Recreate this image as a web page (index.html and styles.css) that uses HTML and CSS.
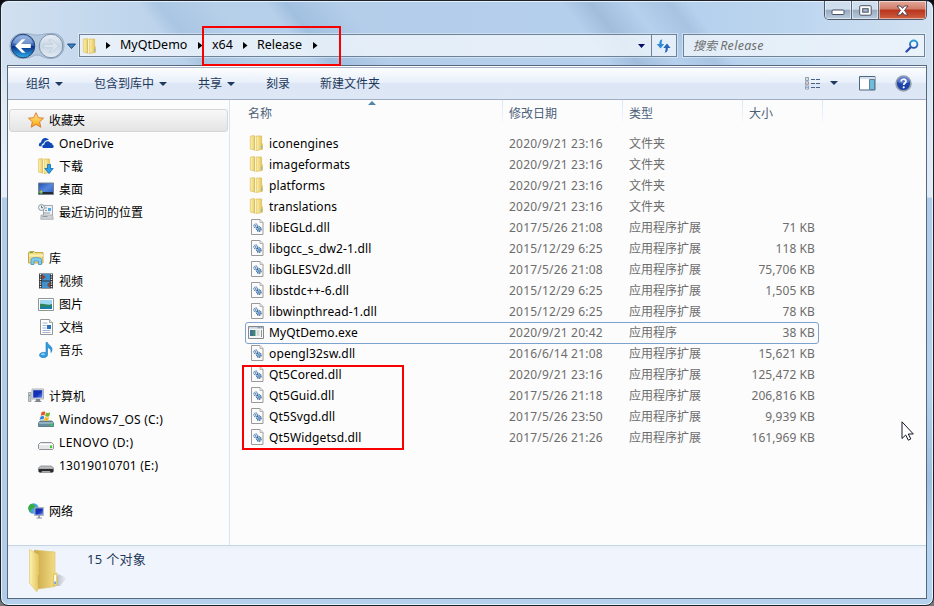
FILE: index.html
```
<!DOCTYPE html>
<html lang="zh-CN">
<head>
<meta charset="utf-8">
<title>Release</title>
<link rel="stylesheet" href="styles.css">
</head>
<body>
<svg class="defs" width="0" height="0" aria-hidden="true">
<defs>
<linearGradient id="gold" x1="0" x2="1"><stop offset="0" stop-color="#fbf2b0"/><stop offset="1" stop-color="#e6c65f"/></linearGradient>
<linearGradient id="goldDark" x1="0" x2="1"><stop offset="0" stop-color="#c9a545"/><stop offset="1" stop-color="#f3dc83"/></linearGradient>
<linearGradient id="blueV" x1="0" y1="0" x2="0" y2="1"><stop offset="0" stop-color="#7fa6dc"/><stop offset=".48" stop-color="#3060b4"/><stop offset=".52" stop-color="#0a2f88"/><stop offset="1" stop-color="#2fb2ee"/></linearGradient>
<linearGradient id="greyV" x1="0" y1="0" x2="0" y2="1"><stop offset="0" stop-color="#e8eff6"/><stop offset=".5" stop-color="#c9d6e4"/><stop offset="1" stop-color="#e3ebf4"/></linearGradient>
<linearGradient id="screen" x1="0" y1="0" x2="1" y2="1"><stop offset="0" stop-color="#12309f"/><stop offset=".55" stop-color="#1631bd"/><stop offset="1" stop-color="#6d8df0"/></linearGradient>
<linearGradient id="star" x1="0" y1="0" x2="0" y2="1"><stop offset="0" stop-color="#ffe99a"/><stop offset=".6" stop-color="#ffc43a"/><stop offset="1" stop-color="#f79a1e"/></linearGradient>
<linearGradient id="lens" x1="0" y1="0" x2="0" y2="1"><stop offset="0" stop-color="#2a9ed8"/><stop offset="1" stop-color="#2c4fb0"/></linearGradient>
<linearGradient id="desktop" x1="0" y1="0" x2="1" y2="1"><stop offset="0" stop-color="#1f4fae"/><stop offset=".5" stop-color="#5588dc"/><stop offset="1" stop-color="#2a5cc0"/></linearGradient>
<symbol id="folder" viewBox="0 0 16 16">
<path d="M1.300 1.200 5 .600 6.500 1.500V15.200L1.300 14z" fill="url(#gold)" stroke="#dcc062" stroke-width=".7"/>
<path d="M5.200 2 7.500 1V14L5.200 15.400z" fill="#c9a94c"/>
<path d="M7.300 1h5.300V14.500L7.300 15.500z" fill="url(#gold)" stroke="#dabb58" stroke-width=".7"/>
<path d="M5.800 1.600 7.200 1.200V15L5.800 15.400z" fill="#fff6c4"/>
<path d="M12.400 8.600h1.400V14.300l-1.400.6z" fill="#e3bd53"/><path d="M12.200 11h1v2.400h-1z" fill="#72b5dd"/>
</symbol>
<symbol id="dll" viewBox="0 0 16 16">
<path d="M2.500.5H11l3 3V15.500H2.500z" fill="#fbfbfb" stroke="#9a9a9a"/>
<path d="M11 .5V3.500h3" fill="#e6e6e6" stroke="#a8a8a8" stroke-width=".8"/>
<circle cx="6.700" cy="6.900" r="2" fill="#cfe4f5" stroke="#3a6a9f" stroke-width="1" stroke-dasharray="1.200 .5"/>
<circle cx="9.900" cy="10" r="2.200" fill="#a9cdea" stroke="#2a5790" stroke-width="1.100" stroke-dasharray="1.300 .5"/>
<circle cx="6.700" cy="6.900" r=".6" fill="#234f86"/><circle cx="9.900" cy="10" r=".7" fill="#234f86"/>
</symbol>
<symbol id="exe" viewBox="0 0 16 16">
<path d="M.5 2.500h15v12H.5z" fill="#f6f6f6" stroke="#84898e"/><path d="M1 3h14v1.600H1z" fill="#cdd4da"/>
<path d="M9.600 3.200h1v1h-1zM11.400 3.200h1v1h-1zM13.200 3.200h1v1h-1z" fill="#48749a"/>
<path d="M2 6h5.500v6H2z" fill="#3c8a6c"/><path d="M2 6h2.700v6H2z" fill="#3e6f9d"/>
<path d="M8.500 7h3M8.500 9h3M8.500 11h3" stroke="#b2b2b2" stroke-width=".9"/><path d="M13 6h1v7h-1z" fill="#7ea08c"/>
</symbol>
<symbol id="fav" viewBox="0 0 16 16"><path d="M8 .700 10.300 5.700 15.600 6.200 11.600 9.800 12.800 15.200 8 12.400 3.200 15.200 4.400 9.800 .400 6.200 5.700 5.700z" fill="url(#star)" stroke="#d9772a" stroke-width=".9"/></symbol>
<symbol id="onedrive" viewBox="0 0 16 16"><path d="M1.300 11.300C.2 9.500 1.300 7.700 3 7.600 3.100 4.500 5.800 2.500 8.400 3.200 9.600 3.500 10.400 4.200 10.900 5 8.300 4.600 6 6 5.600 8.300 3.800 8.600 3.300 10 3.700 11.300z" fill="#0e49b5"/><path d="M5.500 13C3.800 12.700 3.800 9.600 6.400 9.400 6.300 6.300 10.700 4.700 12.600 8.100 14.200 7.900 14.700 9.200 14.600 10.100 16.300 10.600 15.800 12.900 14.400 13z" fill="#0e49b5"/></symbol>
<symbol id="down" viewBox="0 0 16 16"><use href="#folder" x="-1" width="16" height="16"/><path d="M9.500 6.500h3v4h2.700L11 15.600 6.800 10.500h2.700z" fill="#27a3ec" stroke="#0f6ab5" stroke-width=".8"/></symbol>
<symbol id="desk" viewBox="0 0 16 16"><path d="M.5 2h15v11.500H.5z" fill="url(#desktop)" stroke="#76828f"/><path d="M1 11h14v2H1z" fill="#252a33"/><circle cx="3" cy="11.300" r="1.700" fill="#54b85d"/><path d="M2.500 9.800h1.500v1.500H2.500z" fill="#ffba30"/></symbol>
<symbol id="recent" viewBox="0 0 16 16"><path d="M5.500 1.500h9v10h-9z" fill="#eef2f4" stroke="#a2a8ae"/><path d="M3 11h11.500l.8 4.300H2.800z" fill="#cfd2d4" stroke="#a7aaad" stroke-width=".8"/><path d="M7 4h2M7 6.500h2M5 9h7M4.500 12.500h5" stroke="#8b9ba6"/><path d="M10 4h3v3h-3z" fill="#4ea8e5"/><circle cx="3.500" cy="3.500" r="3" fill="#edf2f5" stroke="#909ba4"/><path d="M3.500 1.700v2h1.500" stroke="#3e5364" stroke-width=".8" fill="none"/></symbol>
<symbol id="lib" viewBox="0 0 16 16"><path d="M.5 13V2.500L2 1.500h4l1 1h8v10.500z" fill="#efd982" stroke="#c7a84d"/><path d="M1 4.500h14v2H1z" fill="#fff1ab"/><path d="M2 2.500h3" stroke="#52b43f"/><path d="M3 14.500V9.500C3 7 13.500 7 13.500 9.500v5h-3V11h-4.500v3.500z" fill="#82cced" stroke="#3e92c7" stroke-width=".8"/></symbol>
<symbol id="video" viewBox="0 0 16 16"><path d="M1 .5h14v15H1z" fill="#303438"/><path d="M4 1h8v6.500H4zM4 8.500h8V15H4z" fill="#3f92d0"/><path d="M4 1 8 4 4 7zM12 8.500 9 12l3 3z" fill="#884538"/><path d="M2.500 1v15M13.500 1v15" stroke="#f3f3f3" stroke-width="1.400" stroke-dasharray="1.200 1.200"/></symbol>
<symbol id="pic" viewBox="0 0 16 16"><path d="M.5 2.500h15v12H.5z" fill="#fff" stroke="#8e969c"/><path d="M2 4h12v9H2z" fill="#9ed8f2"/><path d="M2 8c4-1 8 2 12 0v5H2z" fill="#328556"/><path d="M2 10.500c4 1 8-1 12 0V13H2z" fill="#197eaa"/></symbol>
<symbol id="doc" viewBox="0 0 16 16"><path d="M2.500.5h9l3 3v12h-12z" fill="#fff" stroke="#92979c"/><path d="M11.500.5v3h3" fill="#e8edf1" stroke="#92979c" stroke-width=".8"/><path d="M4.500 4h5M4.500 6.500h4M4.500 9h4M4.500 11.500h8M4.500 13.500h8" stroke="#9aa9cb" stroke-width=".9"/><path d="M9 6h4v4H9z" fill="#2871bb"/></symbol>
<symbol id="music" viewBox="0 0 16 16"><path d="M8 .5h1.500c.5 3 5 3 4.500 7.500-.2 1-.7 2-1 2.500.3-3-1.300-4.500-3.500-5V13c0 1.500-1.800 2.700-4 2.700-2.500 0-4-1-4-2.600C1.500 10.800 5 9.700 8 10.700z" fill="#2f9be0" stroke="#2379bc" stroke-width=".6"/><ellipse cx="5" cy="12.200" rx="2" ry="1" fill="#8bd7fa"/></symbol>
<symbol id="pc" viewBox="0 0 16 16"><path d="M.5 4.500h2.500v9H.5z" fill="#c4cacf" stroke="#929ba3" stroke-width=".8"/><path d="M1 7h1v1H1z" fill="#37b04a"/><path d="M4 1h11.500v10H4z" fill="#e4e7e9" stroke="#9aa3aa" stroke-width=".8"/><path d="M5.200 2.200h9.100v7.500H5.200z" fill="url(#screen)"/><path d="M8 11h4v1.500l2 1.500H6l2-1.500z" fill="#80878e"/></symbol>
<symbol id="osdrive" viewBox="0 0 16 16"><path d="M2 10h12l1.500 2v3.500H.5V12z" fill="#688e9e" stroke="#4b6b79" stroke-width=".8"/><path d="M1 12h14" stroke="#bed6df"/><path d="M12.500 12.500h2V15h-2z" fill="#2ed34d"/><path d="M3.500 1.200C5 .3 6.500.5 7.300 1L6.500 4.500C5.500 4 4 4 2.800 4.700z" fill="#e7542c"/><path d="M8 1.400c1.500 1 3 .8 4.200.2l-1 3.700c-1.300.6-2.700.6-4-.2z" fill="#75b32b"/><path d="M2.600 5.400c1.300-.7 2.600-.7 3.700 0l-.9 3.400c-1.300-.6-2.500-.6-3.800.1z" fill="#3080d8"/><path d="M7 5.800c1.400.9 2.700.9 4 .3l-.9 3.500c-1.300.6-2.600.5-4-.3z" fill="#f9bb24"/></symbol>
<symbol id="drive" viewBox="0 0 16 16"><path d="M2.500 6.500h11l2 2v4l-1 1h-13l-1-1v-4z" fill="#e6e7e8" stroke="#85898d" stroke-width=".9"/><path d="M1 8.500h14" stroke="#fff"/><path d="M12 9.500h2V12h-2z" fill="#38cf2d"/></symbol>
<symbol id="usb" viewBox="0 0 16 16"><path d="M2.500 7h11l2 2v3.500l-1 1h-13l-1-1V9z" fill="#a9abac" stroke="#8a8c8e" stroke-width=".8"/><path d="M.8 10h14.400v2.700l-2.200.8-1.300-1.500H4.300L3 13.500l-2.200-.8z" fill="#292b2d"/><path d="M2 8.300h12" stroke="#c0c2c3"/></symbol>
<symbol id="net" viewBox="0 0 16 16"><circle cx="5.500" cy="5.500" r="5.200" fill="#4aa1e4"/><path d="M3 1c3 0 5 1 4 3S3 5 3 8 1 8 .5 6 1 2 3 1z" fill="#36ae3d"/><path d="M6.500 4.500h9.200v8H6.500z" fill="#dce2e6" stroke="#8f9aa3" stroke-width=".7"/><path d="M7.300 5.300h7.600v6.400H7.300z" fill="url(#screen)"/><path d="M10.300 12.500h1.600V14.500H14v1H8.500v-1h1.800z" fill="#87909a"/></symbol>
</defs>
</svg>

<div class="window">
<header class="titlebar">
<div class="controls">
<span class="ctl min"><svg width="14" height="7"><rect x="1" y="1" width="12" height="4.500" rx="1" fill="#fff" stroke="#4c5263"/></svg></span>
<span class="ctl max"><svg width="13" height="11"><rect x=".7" y=".7" width="11.500" height="9.500" rx="1" fill="#fff" stroke="#4c5263"/><rect x="3.700" y="3.700" width="5.500" height="3.500" fill="#a4b7cf" stroke="#4c5263"/></svg></span>
<span class="ctl close"><svg width="13" height="11"><path d="M1 1h3.500l2 2.400L8.500 1H12L8.500 5.400 12 10H8.500l-2-2.500-2 2.500H1l3.500-4.600z" fill="#fff" stroke="#57434e"/></svg></span>
</div>
</header>

<nav class="navbar">
<svg class="travel" width="70" height="30" viewBox="0 0 70 30">
<path d="M15 2.500C23 2.500 24 4 29 4S36 2.500 44 2.500 56 7.500 56 15 50 27.500 43 27.500 33 24 29 24 23 27.500 15 27.500 2 22 2 15 7 2.500 15 2.500z" fill="#b3c8de" stroke="#98afc6"/>
<circle cx="15" cy="15" r="11.800" fill="url(#blueV)" stroke="#27416f"/><path d="M5 12a10.500 10.500 0 0 1 20 0q-10 4-20 0z" fill="#fff" opacity=".25"/>
<path d="M7 15 14 8.300h3.500L13 13.100h9.800v3.800H13l4.500 4.800H14z" fill="#fff"/>
<circle cx="43" cy="15" r="11.800" fill="url(#greyV)" stroke="#7890aa"/><path d="M50.500 15 44 8.800h-3.200l4.200 4.500h-9.300v3.400H45l-4.200 4.500H44z" fill="#d9e4ef" stroke="#bccbdb" stroke-width=".7"/>
<path d="M59.500 13h8L63.500 17.500z" fill="#3983c4" stroke="#173e78" stroke-width=".9"/>
</svg>
<div class="address">
<svg class="i16"><use href="#folder"/></svg>
<svg class="arrow a1" width="5" height="7"><path d="M0 0 4.500 3.500 0 7z"/></svg><span class="crumb c1">MyQtDemo</span>
<svg class="arrow a2" width="5" height="7"><path d="M0 0 4.500 3.500 0 7z"/></svg><span class="crumb c2">x64</span>
<svg class="arrow a3" width="5" height="7"><path d="M0 0 4.500 3.500 0 7z"/></svg><span class="crumb c3">Release</span>
<svg class="arrow a4" width="5" height="7"><path d="M0 0 4.500 3.500 0 7z"/></svg>
<svg class="history" width="7" height="4"><path d="M0 0h7L3.500 4z" fill="#000c66"/></svg>
<span class="refresh"><svg width="16" height="14"><path d="M6.500.5C4 .5 3.300 2 3.300 5H.7L4.500 9.500 8.200 5H5.700C5.700 3 5.700 2 6.500.5z" fill="#2c8bd4"/><path d="M8.500 13.500c2.500 0 3.400-1.500 3.400-4.500h2.600L11 4.500 7.200 9h2.400c0 2 0 3-1.100 4.500z" fill="#2667b7"/></svg></span>
</div>
<div class="search"><span>搜索 <i>Release</i></span><svg width="14" height="14"><path d="M1.500 12.500 6 8" stroke="#2c4eaa" stroke-width="2.400" stroke-linecap="round"/><circle cx="8.700" cy="5.200" r="3.700" fill="#eef7fc" stroke="url(#lens)" stroke-width="1.900"/></svg></div>
</nav>

<main class="client">
<div class="toolbar">
<span class="cmd t1">组织<b></b></span><span class="cmd t2">包含到库中<b></b></span><span class="cmd t3">共享<b></b></span><span class="cmd t4">刻录</span><span class="cmd t5">新建文件夹</span>
<span class="tools">
<svg width="16" height="13"><path d="M.5.500h3v3h-3zM.5 4.700h3v3h-3zM.5 9h3v3h-3z" fill="#fff" stroke="#8795a8" stroke-width=".9"/><path d="M1.500 1.500h1v1h-1z" fill="#359a44"/><path d="M1.500 5.700h1v1h-1z" fill="#e02424"/><path d="M1.500 10h1v1h-1z" fill="#2b62cc"/><path d="M6 2.500h10M6 6.500h10M6 10.500h10" stroke="#47628a" stroke-dasharray="4 1"/></svg>
<b class="v"></b>
<svg class="pane" width="17" height="15"><path d="M.5.500h15.500v13.500H.5z" fill="#fff" stroke="#496985"/><path d="M1 1h15v2H1z" fill="#d6e1ec"/><path d="M10.500 3.500h5v10h-5z" fill="#70bcdc" stroke="#5f8196"/></svg>
<svg class="help" width="17" height="17"><circle cx="8.500" cy="8.500" r="7.400" fill="#1e43aa" stroke="#969fac" stroke-width="1.700"/><path d="M2.500 7a6 6 0 0 1 12 0q-6 3-12 0z" fill="#7997df" opacity=".65"/><path d="M6.200 6.500C6.200 3.500 11 3.500 11 6.300 11 8 8.700 8 8.700 10" fill="none" stroke="#fff" stroke-width="1.700"/><circle cx="8.700" cy="12.300" r="1.100" fill="#fff"/></svg>
</span>
</div>

<div class="body">
<aside class="tree">
<div class="node root selected"><svg class="i16"><use href="#fav"/></svg>收藏夹</div>
<div class="node"><svg class="i16"><use href="#onedrive"/></svg><span class="latin">OneDrive</span></div>
<div class="node"><svg class="i16"><use href="#down"/></svg>下载</div>
<div class="node"><svg class="i16"><use href="#desk"/></svg>桌面</div>
<div class="node"><svg class="i16"><use href="#recent"/></svg>最近访问的位置</div>
<div class="node root next"><svg class="i16"><use href="#lib"/></svg>库</div>
<div class="node"><svg class="i16"><use href="#video"/></svg>视频</div>
<div class="node"><svg class="i16"><use href="#pic"/></svg>图片</div>
<div class="node"><svg class="i16"><use href="#doc"/></svg>文档</div>
<div class="node"><svg class="i16"><use href="#music"/></svg>音乐</div>
<div class="node root next"><svg class="i16"><use href="#pc"/></svg>计算机</div>
<div class="node"><svg class="i16"><use href="#osdrive"/></svg><span class="latin">Windows7_OS (C:)</span></div>
<div class="node"><svg class="i16 low"><use href="#drive"/></svg><span class="latin wide">LENOVO (D:)</span></div>
<div class="node"><svg class="i16 low"><use href="#usb"/></svg><span class="latin">13019010701 (E:)</span></div>
<div class="node root next"><svg class="i16"><use href="#net"/></svg>网络</div>
</aside>

<section class="files">
<div class="head"><span>名称<svg class="sort" width="8" height="4"><path d="M0 4h8L4 0z" fill="#4e84a6"/></svg></span><span>修改日期</span><span>类型</span><span>大小</span></div>
<div class="row"><svg class="i16"><use href="#folder"/></svg><span class="name">iconengines</span><span class="date">2020/9/21 23:16</span><span>文件夹</span><span></span></div>
<div class="row"><svg class="i16"><use href="#folder"/></svg><span class="name">imageformats</span><span class="date">2020/9/21 23:16</span><span>文件夹</span><span></span></div>
<div class="row"><svg class="i16"><use href="#folder"/></svg><span class="name">platforms</span><span class="date">2020/9/21 23:16</span><span>文件夹</span><span></span></div>
<div class="row"><svg class="i16"><use href="#folder"/></svg><span class="name">translations</span><span class="date">2020/9/21 23:16</span><span>文件夹</span><span></span></div>
<div class="row"><svg class="i16"><use href="#dll"/></svg><span class="name">libEGLd.dll</span><span class="date">2017/5/26 21:08</span><span>应用程序扩展</span><span class="size">71 KB</span></div>
<div class="row"><svg class="i16"><use href="#dll"/></svg><span class="name">libgcc_s_dw2-1.dll</span><span class="date">2015/12/29 6:25</span><span>应用程序扩展</span><span class="size">118 KB</span></div>
<div class="row"><svg class="i16"><use href="#dll"/></svg><span class="name">libGLESV2d.dll</span><span class="date">2017/5/26 21:08</span><span>应用程序扩展</span><span class="size">75,706 KB</span></div>
<div class="row"><svg class="i16"><use href="#dll"/></svg><span class="name">libstdc++-6.dll</span><span class="date">2015/12/29 6:25</span><span>应用程序扩展</span><span class="size">1,505 KB</span></div>
<div class="row"><svg class="i16"><use href="#dll"/></svg><span class="name">libwinpthread-1.dll</span><span class="date">2015/12/29 6:25</span><span>应用程序扩展</span><span class="size">78 KB</span></div>
<div class="row focus"><svg class="i16"><use href="#exe"/></svg><span class="name">MyQtDemo.exe</span><span class="date">2020/9/21 20:42</span><span>应用程序</span><span class="size">38 KB</span></div>
<div class="row"><svg class="i16"><use href="#dll"/></svg><span class="name">opengl32sw.dll</span><span class="date">2016/6/14 21:08</span><span>应用程序扩展</span><span class="size">15,621 KB</span></div>
<div class="row"><svg class="i16"><use href="#dll"/></svg><span class="name">Qt5Cored.dll</span><span class="date">2020/9/21 23:16</span><span>应用程序扩展</span><span class="size">125,472 KB</span></div>
<div class="row"><svg class="i16"><use href="#dll"/></svg><span class="name">Qt5Guid.dll</span><span class="date">2017/5/26 21:18</span><span>应用程序扩展</span><span class="size">206,816 KB</span></div>
<div class="row"><svg class="i16"><use href="#dll"/></svg><span class="name">Qt5Svgd.dll</span><span class="date">2017/5/26 23:50</span><span>应用程序扩展</span><span class="size">9,939 KB</span></div>
<div class="row"><svg class="i16"><use href="#dll"/></svg><span class="name">Qt5Widgetsd.dll</span><span class="date">2017/5/26 21:26</span><span>应用程序扩展</span><span class="size">161,969 KB</span></div>
</section>
</div>

<footer class="details">
<svg width="44" height="46" viewBox="0 0 44 46"><defs><linearGradient id="sh" x1="0" x2="1"><stop offset="0" stop-color="#8d949e" stop-opacity=".7"/><stop offset="1" stop-color="#8d949e" stop-opacity="0"/></linearGradient></defs>
<path d="M26 38 30 26 39 30 32 38z" fill="url(#sh)"/>
<path d="M6 2 27 4V38.500L10 41z" fill="url(#goldDark)" stroke="#dcc06a" stroke-width=".6"/>
<path d="M1.500 1.500 10.500 7V26L9.500 28V43L8.500 43.500 1.500 35z" fill="url(#gold)" stroke="#e3c971" stroke-width=".7"/>
<path d="M25.500 26l3.500-1v12l-3.500 1z" fill="#f2d778" stroke="#d7b754" stroke-width=".6"/><path d="M26.300 27h1.600v8h-1.600z" fill="#fff"/><path d="M26.300 33.500h1.600v2.500h-1.600z" fill="#5e9fe0"/></svg>
<span>15 个对象</span>
</footer>
</main>

<div class="mark mark-path"></div>
<div class="mark mark-files"></div>
<svg class="cursor" width="13" height="20"><path d="M1 .8V17.500L4.700 14 7.300 19.200 9.800 18 7.300 13H12.300z" fill="#fff" stroke="#15152a"/></svg>
</div>
</body>
</html>
```
FILE: styles.css
```
* { box-sizing: border-box; }
html, body { margin: 0; width: 934px; height: 606px; overflow: hidden; }
body { background: linear-gradient(#0b0b10 50%, #777 50%); font: 12px/16px "Noto Sans", "Noto Sans CJK SC", sans-serif; color: #000; }
.defs { position: absolute; }
svg { flex: none; display: block; }
.i16 { width: 16px; height: 16px; }

.window {
  position: relative; width: 934px; height: 606px; padding: 0 6px 6px;
  border: 1px solid #1d222b; border-radius: 8px;
  box-shadow: inset 0 0 0 1px #e4f1fb;
  background:
    linear-gradient(180deg, transparent 62px, #dfe9f4 100px, #e9f0f8 196px, #b1cce8 197px) 0 0 / 6px 100% no-repeat,
    linear-gradient(180deg, transparent 62px, #dbe8f5 100px, #e1ecf7 196px, #b1cce8 197px, #b6d2ec 390px, #9fbfdf 480px, #b5d2ee 540px) 100% 0 / 6px 100% no-repeat,
    linear-gradient(#b4d0ec, #b4d0ec) 0 100% / 100% 8px no-repeat,
    linear-gradient(52deg, transparent 19%, rgba(150,182,216,.45) 21%, rgba(150,182,216,0) 27%, transparent 32%, rgba(140,176,213,.5) 34%, rgba(140,176,213,0) 40%, transparent 62%, rgba(140,170,205,.5) 65%, transparent 69%, rgba(140,170,205,.35) 73%, transparent 75%) 0 0 / 100% 66px no-repeat,
    linear-gradient(90deg, #d2e0f0 0, #c3d8ed 100px, #b7d0ea 200px, #b3cdea 430px, #b6d1ed 700px, #bdd6ef 800px, #d2e2f2 100%);
}
.titlebar { height: 32px; display: flex; justify-content: flex-end; }
.controls { display: flex; height: 19px; border: 1px solid #4f586b; border-top: 0; border-radius: 0 0 5px 5px; overflow: hidden; }
.ctl { display: grid; place-items: center; height: 18px; box-shadow: inset 0 0 0 1px rgba(255,255,255,.5); background: linear-gradient(#cfdeed 0 46%, #98aabf 50%, #b8cce0); }
.min { width: 27px; border-right: 1px solid #5a657a; padding-top: 5px; }
.max { width: 27px; border-right: 1px solid #5a657a; }
.close { width: 47px; background: linear-gradient(#e3a99c 0, #d07b67 45%, #b8331b 50%, #cf6042); }

.navbar { height: 32px; display: flex; align-items: flex-start; }
.travel { margin: -2px 1px 0 1px; }
.address { width: 598px; height: 23px; display: flex; align-items: center; padding-left: 2px; border: 1px solid #6e8298; background: rgba(239,245,251,.82); box-shadow: 0 0 0 1px rgba(255,255,255,.4); margin-top: 1px; font-size: 12.500px; }
.a1 { margin-left: 8px; }
.c1 { margin-left: 9px; width: 71px; }
.a2 { margin-left: 7px; }
.c2 { margin-left: 9px; width: 22px; }
.a3 { margin-left: 9px; }
.c3 { margin-left: 9px; width: 48px; }
.a4 { margin-left: 8px; }
.crumb { margin-top: -1px; }
.arrow { margin-top: -1px; }
.history { margin-left: auto; }
.refresh { display: grid; place-items: center; width: 25px; height: 21px; margin-left: 6px; border-left: 1px solid #6e8298; }
.search { width: 242px; height: 23px; margin: 1px 0 0 6px; display: flex; align-items: center; justify-content: space-between; padding: 0 5px 0 9px; border: 1px solid #6e8298; background: rgba(239,245,251,.82); box-shadow: 0 0 0 1px rgba(255,255,255,.4); color: #6d6d6d; font-style: italic; }
.search i { font-size: 12.500px; letter-spacing: .3px; }

.client { width: 920px; height: 534px; border: 1px solid #56687c; display: flex; flex-direction: column; background: #fcfcfc; }
.toolbar { flex: none; height: 34px; display: flex; align-items: center; border-top: 1px solid #fff; border-bottom: 1px solid #a0afc3; box-shadow: inset 0 1px #a8b5cb; background: linear-gradient(#fdfeff, #e9f0fa 48%, #dce6f4 52%, #dde7f5); color: #1e395b; padding-left: 18px; }
.cmd { display: flex; align-items: center; padding-top: 2px; }
.cmd b, .v { border: 4px solid transparent; border-top-color: #1e395b; border-bottom: 0; margin-left: 5px; }
.cmd b { margin-bottom: 1px; }
.t1 { width: 68px; } .t2 { width: 104px; } .t3 { width: 68px; } .t4 { width: 54px; }
.tools { margin-left: auto; margin-right: 14px; display: flex; align-items: center; }
.tools .v { margin-left: 9px; }
.pane { margin-left: 21px; }
.help { margin-left: 19px; }

.body { flex: none; height: 445px; display: flex; }
.tree { width: 222px; padding-top: 9px; border-right: 1px solid #d9e5f3; }
.node { height: 23px; display: flex; align-items: center; gap: 5px; padding-left: 30px; white-space: nowrap; }
.root { padding-left: 20px; }
.selected { width: 219px; height: 23px; margin-left: 1px; padding-left: 18px; border: 1px solid #d6d6d6; border-radius: 3px; background: linear-gradient(#f8f8f8, #e4e4e4); }
.node .i16 { margin-bottom: 1px; }
.node .low { margin-bottom: -2px; }
.next { margin-top: 23px; }
.latin { letter-spacing: .22px; }
.wide { letter-spacing: .4px; }

.files { width: 600px; padding-left: 15px; }
.head { height: 33px; display: grid; grid-template-columns: 258px 120px 120px 80px; color: #4c607a; line-height: 27px; position: relative; }
.head span { height: 22px; padding-left: 6px; border-right: 1px solid; border-image: linear-gradient(#d6e5f5, #f4f9fe) 1; }
.head span:first-child { padding-left: 3px; }
.sort { position: absolute; left: 123px; top: 1px; }
.row { width: 574px; height: 21px; display: grid; grid-template-columns: 16px 244px 120px 120px 66px; align-items: center; padding-left: 4px; color: #6d6d6d; white-space: nowrap; }
.row .i16 { margin-bottom: 1px; }
.row .name { color: #000; padding-left: 4px; letter-spacing: .13px; }
.date { letter-spacing: .2px; }
.size { text-align: right; letter-spacing: .08px; }
.focus { height: 22px; margin-bottom: -1px; border: 1px solid #7da2ce; border-radius: 3px; padding-left: 3px; }
.focus .i16 { margin-left: -1px; margin-bottom: 2px; }

.details { flex: 1; display: flex; padding: 2px 0 0 20px; border-top: 1px solid #c5d5e8; background: linear-gradient(#e8f0f8, #f0f4fc 4px); color: #1e395b; }
.details span { margin-left: 15px; padding-top: 2px; font-size: 13px; line-height: 18px; letter-spacing: .3px; }

.mark { position: absolute; border: 2px solid #f80000; }
.mark-path { left: 201px; top: 25px; width: 139px; height: 40px; }
.mark-files { left: 241px; top: 364px; width: 162px; height: 85px; }
.cursor { position: absolute; left: 900px; top: 420px; }
```
